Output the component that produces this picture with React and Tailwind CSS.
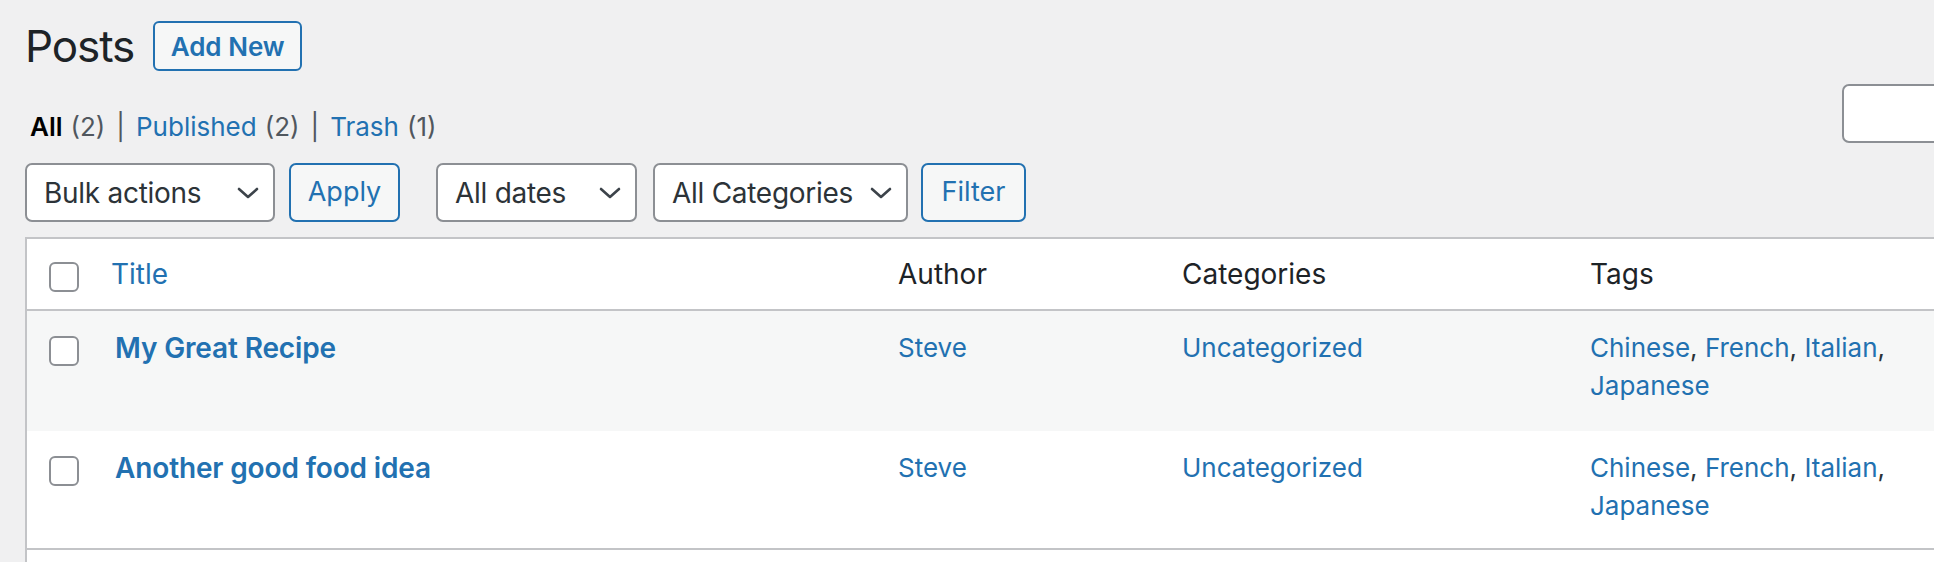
import React from "react";

function Chevron() {
  return (
    <svg width="22" height="12" viewBox="0 0 22 12" fill="none">
      <path d="M2 2l9 8 9-8" stroke="#3c434a" strokeWidth="2.6" strokeLinecap="round" strokeLinejoin="round" />
    </svg>
  );
}

function Select({ label, className }) {
  return (
    <div className={"flex h-[59px] items-center justify-between rounded-[7px] border-2 border-[#8c8f94] bg-white pl-[17px] pr-[14px] text-[28px] tracking-[-0.01em] text-[#2c3338] " + className}>
      <span>{label}</span>
      <Chevron />
    </div>
  );
}

function Btn({ label, className }) {
  return (
    <div className={"flex h-[59px] items-center justify-center rounded-[7px] border-2 border-[#2271b1] bg-[#f6f7f7] text-[27px] text-[#2271b1] " + className}>
      {label}
    </div>
  );
}

function Checkbox() {
  return <div className="h-[30px] w-[30px] rounded-[6px] border-2 border-[#8c8f94] bg-white" />;
}

function Tags() {
  return (
    <div className="w-[330px] text-[#2271b1]">
      <span>Chinese</span>
      <span className="text-[#2c3338]">, </span>
      <span>French</span>
      <span className="text-[#2c3338]">, </span>
      <span>Italian</span>
      <span className="text-[#2c3338]">, </span>
      <span>Japanese</span>
    </div>
  );
}

function Row({ title, bg, h }) {
  return (
    <div className={"grid grid-cols-[68px_803px_284px_408px_1fr] text-[26px] leading-[38px] " + bg + " " + h}>
      <div className="pl-[22px] pt-[25px]">
        <Checkbox />
      </div>
      <div className="pl-[20px] pt-[18px] text-[28px] font-semibold tracking-[-0.005em] text-[#2271b1]">{title}</div>
      <div className="pt-[18px] text-[#2271b1]">Steve</div>
      <div className="pt-[18px] text-[#2271b1]">Uncategorized</div>
      <div className="pt-[18px]">
        <Tags />
      </div>
    </div>
  );
}

export default function App() {
  return (
    <div className="h-[562px] w-[1934px] overflow-hidden bg-[#f0f0f1] pl-[25px] font-['Inter','Noto_Sans',sans-serif] text-[#1d2327]">
      <div className="mt-[16px] flex h-[60px] items-center">
        <h1 className="text-[44px] leading-[60px] font-normal tracking-[-0.025em] text-[#1d2327]">Posts</h1>
        <div className="ml-[19px] flex h-[50px] w-[149px] items-center justify-center rounded-[6px] border-2 border-[#2271b1] bg-[#f6f7f7] text-[26px] font-semibold text-[#2271b1]">
          Add New
        </div>
      </div>

      <div className="mt-[8px] flex h-[59px] items-start justify-between">
        <div className="flex pt-[27px] pl-[5px] text-[26px] leading-[32px] text-[#50575e]">
          <span className="font-semibold text-black">All</span>
          <span className="ml-[8px]">(2)</span>
          <span className="mx-[11px] text-[#50575e]">|</span>
          <span className="text-[#2271b1]">Published</span>
          <span className="ml-[8px]">(2)</span>
          <span className="mx-[11px] text-[#50575e]">|</span>
          <span className="text-[#2271b1]">Trash</span>
          <span className="ml-[8px]">(1)</span>
        </div>
        <div className="mr-[-60px] h-[59px] w-[152px] rounded-[7px] border-2 border-[#8c8f94] bg-white" />
      </div>

      <div className="mt-[20px] flex h-[59px] items-center">
        <Select label="Bulk actions" className="w-[250px]" />
        <Btn label="Apply" className="ml-[14px] w-[111px]" />
        <Select label="All dates" className="ml-[36px] w-[201px]" />
        <Select label="All Categories" className="ml-[16px] w-[255px]" />
        <Btn label="Filter" className="ml-[13px] w-[105px]" />
      </div>

      <div className="mt-[15px] w-[1980px] border-l-2 border-t-2 border-[#c3c4c7] bg-white">
        <div className="grid h-[72px] grid-cols-[68px_803px_284px_408px_1fr] border-b-2 border-[#c3c4c7] text-[28px] leading-[40px]">
          <div className="pl-[22px] pt-[23px]">
            <Checkbox />
          </div>
          <div className="pl-[16px] pt-[15px] text-[#2271b1]">Title</div>
          <div className="pt-[15px]">Author</div>
          <div className="pt-[15px]">Categories</div>
          <div className="pt-[15px]">Tags</div>
        </div>
        <Row title="My Great Recipe" bg="bg-[#f6f7f7]" h="h-[120px]" />
        <Row title="Another good food idea" bg="bg-white" h="h-[119px] border-b-2 border-[#c3c4c7]" />
        <div className="h-[40px] bg-white" />
      </div>
    </div>
  );
}
